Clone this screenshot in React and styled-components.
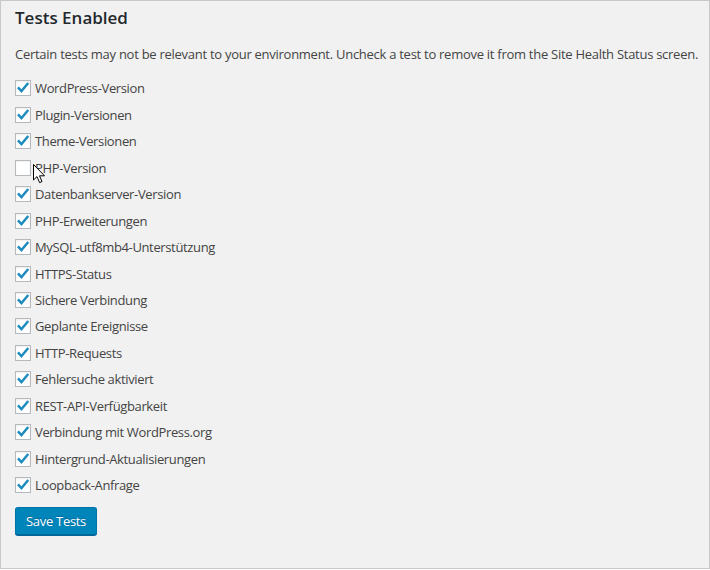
import React from "react";
import styled, { createGlobalStyle } from "styled-components";

const Global = createGlobalStyle`
  html, body { margin: 0; padding: 0; background: #fff; }
  body { font-family: "Open Sans", "Noto Sans", sans-serif; }
`;

const Panel = styled.div`
  box-sizing: border-box;
  width: 710px;
  height: 569px;
  border: 1px solid #c8c8c8;
  background: #f1f1f1;
  padding: 5px 14px 0 14px;
  color: #444;
  font-family: "Open Sans", "Noto Sans", sans-serif;
`;

const Title = styled.h2`
  margin: 0;
  font-size: 17px;
  font-weight: 600;
  color: #23282d;
  line-height: 24px;
`;

const Intro = styled.p`
  margin: 14px 0 11px 0;
  font-size: 13px;
  line-height: 20px;
  letter-spacing: -0.27px;
  color: #444;
  white-space: nowrap;
`;

const List = styled.div`
  display: flex;
  flex-direction: column;
`;

const Row = styled.label`
  position: relative;
  display: flex;
  align-items: center;
  gap: 4px;
  height: 26.47px;
  font-size: 13px;
  letter-spacing: -0.36px;
  color: #444;
`;

const Box = styled.span`
  box-sizing: border-box;
  width: 16px;
  height: 16px;
  border: 1px solid #b4b9be;
  background: #fff;
  box-shadow: inset 0 1px 2px rgba(0, 0, 0, 0.07);
  display: flex;
  align-items: center;
  justify-content: center;
  flex: none;
`;

const Cursor = styled.svg`
  position: absolute;
  left: 18px;
  top: 10px;
  width: 13px;
  height: 20px;
`;

const Button = styled.button`
  margin-top: 8px;
  box-sizing: border-box;
  height: 28px;
  padding: 0 10px;
  background: #0085ba;
  border: 1px solid #0073aa;
  border-bottom-color: #006799;
  border-radius: 3px;
  box-shadow: 0 1px 0 #006799;
  color: #fff;
  font-family: "Open Sans", "Noto Sans", sans-serif;
  font-size: 13px;
  letter-spacing: -0.3px;
  line-height: 26px;
  text-shadow: 0 -1px 1px #006799;
`;

const Check = () => (
  <svg width="14" height="14" viewBox="0 0 14 14">
    <path d="M1 7.2 L2.9 5.4 L5.4 8.2 L11.3 1.2 L13.2 2.8 L5.5 11.9 Z" fill="#1e8cbe" />
  </svg>
);

const tests = [
  ["WordPress-Version", true],
  ["Plugin-Versionen", true],
  ["Theme-Versionen", true],
  ["PHP-Version", false],
  ["Datenbankserver-Version", true],
  ["PHP-Erweiterungen", true],
  ["MySQL-utf8mb4-Unterstützung", true],
  ["HTTPS-Status", true],
  ["Sichere Verbindung", true],
  ["Geplante Ereignisse", true],
  ["HTTP-Requests", true],
  ["Fehlersuche aktiviert", true],
  ["REST-API-Verfügbarkeit", true],
  ["Verbindung mit WordPress.org", true],
  ["Hintergrund-Aktualisierungen", true],
  ["Loopback-Anfrage", true],
];

export default function App() {
  return (
    <>
      <Global />
      <Panel>
        <Title>Tests Enabled</Title>
        <Intro>
          Certain tests may not be relevant to your environment. Uncheck a test to remove it from the Site Health Status screen.
        </Intro>
        <List>
          {tests.map(([name, on]) => (
            <Row key={name}>
              <Box>{on && <Check />}</Box>
              {name}
              {!on && (
                <Cursor viewBox="0 0 13 20">
                  <path
                    d="M0.5 0.5 L0.5 16 L4 12.6 L6.6 18.6 L9 17.6 L6.5 11.8 L11.5 11.8 Z"
                    fill="#fff"
                    stroke="#000"
                    strokeWidth="1"
                    strokeLinejoin="round"
                  />
                </Cursor>
              )}
            </Row>
          ))}
        </List>
        <Button>Save Tests</Button>
      </Panel>
    </>
  );
}
